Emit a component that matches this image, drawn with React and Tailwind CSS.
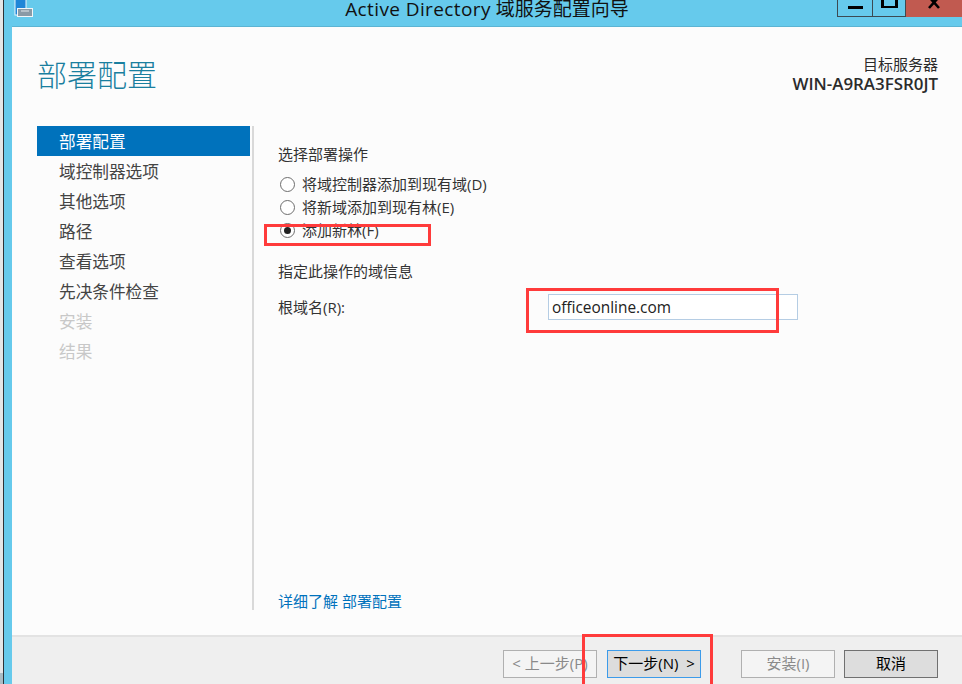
const cjk = { fontFamily: '"Open Sans", "Noto Sans CJK SC", sans-serif' };

const steps = [
  { label: '部署配置', active: true },
  { label: '域控制器选项' },
  { label: '其他选项' },
  { label: '路径' },
  { label: '查看选项' },
  { label: '先决条件检查' },
  { label: '安装', disabled: true },
  { label: '结果', disabled: true },
];

function AppIcon() {
  return (
    <svg width="20" height="18" viewBox="0 0 20 18" className="ml-[2px] block">
      <rect x="1" y="-3" width="11" height="18" fill="#1f86d8" stroke="#e8f4fb" />
      <rect x="3.5" y="8.5" width="15" height="8" fill="#8a9aa6" stroke="#f2f6f8" />
      <rect x="7" y="10.5" width="8" height="1" fill="#dfe5e9" />
    </svg>
  );
}

function WindowControls() {
  return (
    <div className="flex h-[17px] items-start">
      <div className="flex h-[17px] w-[36px] justify-center border-x border-b border-[#3c4a52] pt-[6px]">
        <div className="h-[3px] w-[15px] bg-black" />
      </div>
      <div className="flex h-[17px] w-[33px] justify-center border-r border-b border-[#3c4a52]">
        <div className="h-[8px] w-[17px] border-x-[3px] border-b-[2px] border-black" />
      </div>
      <div className="flex h-[17px] w-[56px] justify-center bg-[#c15a50]">
        <svg width="14" height="9" viewBox="0 0 14 9">
          <path d="M3 -2 L12 8 M11 -2 L2 8" stroke="#000" strokeWidth="2.6" fill="none" />
        </svg>
      </div>
    </div>
  );
}

function Radio({ label, checked }) {
  return (
    <div className="flex h-[23px] items-center gap-[7px] pl-[2px]">
      <span className="flex h-[15px] w-[15px] items-center justify-center rounded-full border border-[#6d6d6d] bg-white">
        {checked && <span className="h-[7px] w-[7px] rounded-full bg-[#222]" />}
      </span>
      <span>{label}</span>
    </div>
  );
}

function WizardButton({ children, variant = 'normal', className = '' }) {
  const variants = {
    normal: 'border-[#707070] bg-[#dddddd] text-black',
    focus: 'border-[#3c9bea] bg-[#dddddd] text-black',
    disabled: 'border-[#b0b0b0] bg-[#f4f4f4] text-[#8a8a8a]',
  };
  return (
    <button className={`h-[28px] w-[94px] whitespace-nowrap border pb-[2px] text-[15px] leading-none ${variants[variant]} ${className}`}>
      {children}
    </button>
  );
}

export default function App() {
  return (
    <div className="relative flex h-[684px] w-[962px] overflow-hidden bg-[#66caec] text-[#333]" style={cjk}>
      <div className="flex w-[3px] flex-col bg-[#e4e6e7]">
        <div className="mt-auto h-[11px] bg-[#a9bcc4]" />
      </div>
      <div className="w-px bg-[#2c3237]" />
      <div className="w-[8px]" />

      <div className="flex min-w-0 flex-1 flex-col">
        <div className="flex h-[27px] items-start border-b border-[#5cb4d3]">
          <div className="flex-1">
            <AppIcon />
          </div>
          <div className="text-[19px] leading-[18px] whitespace-nowrap text-[#111]">
            <span className="tracking-[0.4px]">Active Directory</span> 域服务配置向导
          </div>
          <div className="flex flex-1 justify-end">
            <WindowControls />
          </div>
        </div>

        <main className="flex min-h-0 flex-1 flex-col bg-[#fcfcfc]">
          <header className="flex h-[99px] items-start justify-between pr-[24px] pl-[25px]">
            <h1 className="mt-[26px] text-[30px] leading-[44px] font-light text-[#1a7f9f]">部署配置</h1>
            <div className="mt-[27px] text-right text-[15px] leading-[20px] text-[#2b2b2b]">
              <div>目标服务器</div>
              <div className="text-[16.9px] leading-[20px] font-semibold">WIN-A9RA3FSR0JT</div>
            </div>
          </header>

          <div className="flex h-[484px] pl-[25px]">
            <nav className="w-[217px] border-r-2 border-[#d9d9d9] pr-[2px] text-[16.67px]">
              {steps.map((step) => (
                <div
                  key={step.label}
                  className={`flex h-[30px] items-center pl-[22px] ${
                    step.active ? 'bg-[#0072bc] text-white' : step.disabled ? 'text-[#c8c8c8]' : 'text-[#444]'
                  }`}
                >
                  {step.label}
                </div>
              ))}
            </nav>

            <section className="flex flex-1 flex-col pt-[18px] pl-[24px] text-[15px] text-[#333]">
              <div className="h-[20px] leading-[20px]">选择部署操作</div>
              <div className="mt-[9px]">
                <Radio label="将域控制器添加到现有域(D)" />
                <Radio label="将新域添加到现有林(E)" />
                <Radio label="添加新林(F)" checked />
              </div>
              <div className="mt-[19px] h-[20px] leading-[20px]">指定此操作的域信息</div>
              <div className="mt-[13px] flex items-center">
                <label className="w-[270px]">根域名(R):</label>
                <div className="flex h-[26px] w-[250px] items-center border border-[#b5cde4] bg-white pt-[2px] pl-[3px] text-[15.4px] text-[#222]">
                  officeonline.com
                </div>
              </div>
              <a className="mt-auto mb-[-1px] h-[20px] leading-[20px] text-[#0072bc]">详细了解 部署配置</a>
            </section>
          </div>
        </main>

        <footer className="flex h-[49px] items-start border-t-2 border-[#e3e3e3] bg-[#efefef] pt-[13px] pr-[24px] pl-[491px]">
          <WizardButton variant="disabled">&lt; 上一步(P)</WizardButton>
          <WizardButton variant="focus" className="ml-[10px]">下一步(N) &nbsp;&gt;</WizardButton>
          <WizardButton variant="disabled" className="ml-[40px]">安装(I)</WizardButton>
          <WizardButton className="ml-[9px]">取消</WizardButton>
        </footer>
      </div>

      {/* red annotation boxes drawn over the screenshot */}
      <div className="absolute top-[224px] left-[264px] h-[22px] w-[167px] border-[3px] border-[#ff3b3b]" />
      <div className="absolute top-[288px] left-[526px] h-[45px] w-[253px] border-[3px] border-[#ff3b3b]" />
      <div className="absolute top-[634px] left-[582px] h-[60px] w-[131px] border-[3px] border-[#ff3b3b]" />
    </div>
  );
}
